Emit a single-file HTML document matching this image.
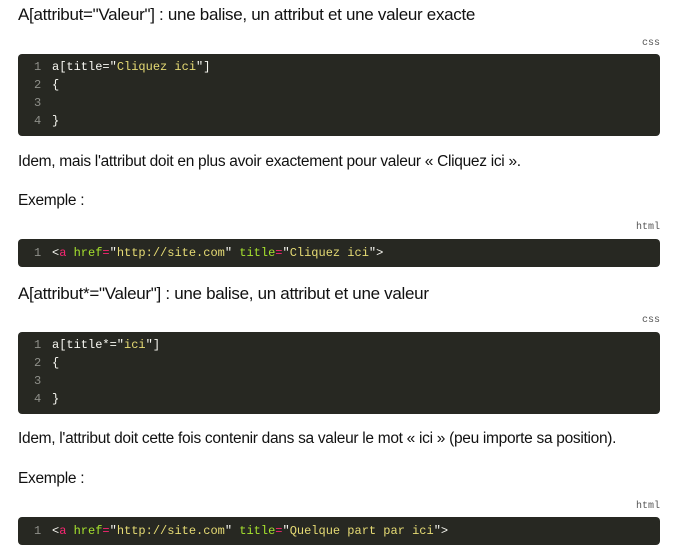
<!DOCTYPE html>
<html><head><style>
body{margin:0;background:#fff;width:687px;height:559px;overflow:hidden;font-family:"Liberation Sans",sans-serif;color:#111;font-size:15.5px;position:relative}
.t{position:absolute;left:18px;white-space:nowrap;letter-spacing:-0.3px}
.h{font-size:17px}
.lab{position:absolute;right:27px;font-family:"Liberation Mono",monospace;font-size:10px;color:#555}
.c{position:absolute;left:18px;width:642px;background:#272822;border-radius:4px;font-family:"Liberation Mono",monospace;font-size:12px;color:#f8f8f2;box-sizing:border-box;padding-left:16px}
.c div{height:18px;line-height:18px;white-space:pre}
.n{color:#8f908a;display:inline-block;width:18px}
.s{color:#e6db74}.k{color:#f92672}.a{color:#a6e22e}
</style></head><body>
<div class="t h" style="top:5px">A[attribut="Valeur"] : une balise, un attribut et une valeur exacte</div>
<div class="lab" style="top:38px">css</div>
<div class="c" style="top:54px;height:82px;padding-top:4px">
<div><span class="n">1</span>a[title="<span class="s">Cliquez ici</span>"]</div>
<div><span class="n">2</span>{</div>
<div><span class="n">3</span></div>
<div><span class="n">4</span>}</div>
</div>
<div class="t" style="top:153px">Idem, mais l'attribut doit en plus avoir exactement pour valeur « Cliquez ici ».</div>
<div class="t" style="top:192px">Exemple :</div>
<div class="lab" style="top:222px">html</div>
<div class="c" style="top:239px;height:28px;padding-top:5px">
<div><span class="n">1</span>&lt;<span class="k">a</span> <span class="a">href</span><span class="k">=</span>"<span class="s">http://site.com</span>" <span class="a">title</span><span class="k">=</span>"<span class="s">Cliquez ici</span>"&gt;</div>
</div>
<div class="t h" style="top:284px">A[attribut*="Valeur"] : une balise, un attribut et une valeur</div>
<div class="lab" style="top:315px">css</div>
<div class="c" style="top:332px;height:82px;padding-top:4px">
<div><span class="n">1</span>a[title*="<span class="s">ici</span>"]</div>
<div><span class="n">2</span>{</div>
<div><span class="n">3</span></div>
<div><span class="n">4</span>}</div>
</div>
<div class="t" style="top:430px">Idem, l'attribut doit cette fois contenir dans sa valeur le mot « ici » (peu importe sa position).</div>
<div class="t" style="top:470px">Exemple :</div>
<div class="lab" style="top:501px">html</div>
<div class="c" style="top:517px;height:28px;padding-top:5px">
<div><span class="n">1</span>&lt;<span class="k">a</span> <span class="a">href</span><span class="k">=</span>"<span class="s">http://site.com</span>" <span class="a">title</span><span class="k">=</span>"<span class="s">Quelque part par ici</span>"&gt;</div>
</div>
</body></html>
